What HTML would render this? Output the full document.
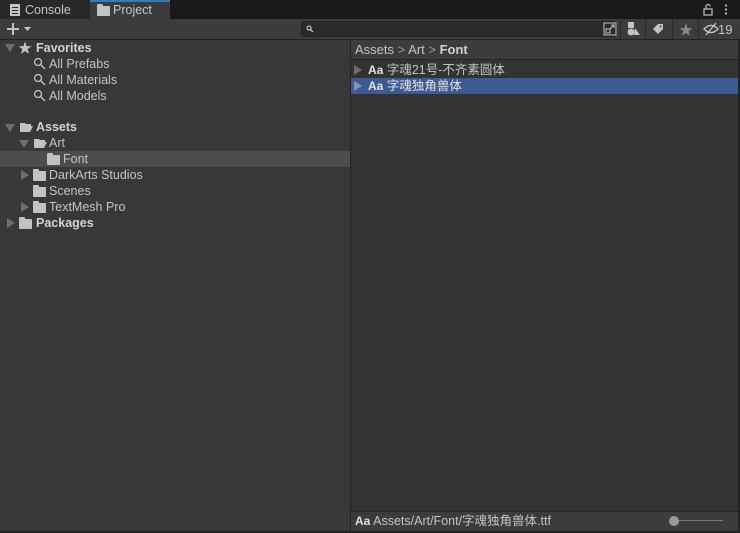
<!DOCTYPE html>
<html><head><meta charset="utf-8"><style>
*{margin:0;padding:0;box-sizing:border-box}
body{width:740px;height:533px;background:#282828;font-family:"Liberation Sans","Noto Sans CJK SC",sans-serif;font-size:12.5px;color:#c4c4c4;position:relative;overflow:hidden}
.abs{position:absolute}
.tabbar{left:0;top:0;width:740px;height:19px;background:#191919}
.tab{top:0;height:19px;line-height:21px;font-size:12.5px;color:#c4c4c4}
.toolbar{left:0;top:19px;width:740px;height:21px;background:#3c3c3c;border-bottom:1px solid #232323}
.left{left:0;top:40px;width:350px;height:493px;background:#383838}
.right{left:351px;top:40px;width:389px;height:471px;background:#333}
.div{left:350px;top:40px;width:1px;height:493px;background:#232323}
.row{position:absolute;height:16px;line-height:16px;white-space:nowrap;font-size:12.5px}
.b{font-weight:bold;color:#d2d2d2}
.tri{position:absolute;width:0;height:0}
.td{border-left:5px solid transparent;border-right:5px solid transparent;border-top:8px solid #6e6e6e}
.tr{border-top:5px solid transparent;border-bottom:5px solid transparent;border-left:8px solid #6e6e6e}
.fold{position:absolute;width:13px;height:10px;background:#c2c2c2;border-radius:1px}
.fold:before{content:"";position:absolute;left:0;top:-2px;width:6px;height:3px;background:#c2c2c2;border-radius:1px 1px 0 0}
.sel{background:#3d5a91}
</style></head><body>
<div class="abs tabbar"></div>
<div class="abs tab" style="left:0;width:90px;background:#282828"></div>
<svg class="abs" style="left:9px;top:4px" width="12" height="12"><rect x="1" y="0" width="10" height="12" fill="#c4c4c4"/><g stroke="#282828" stroke-width="1"><line x1="3" y1="3.5" x2="9" y2="3.5"/><line x1="3" y1="6.5" x2="9" y2="6.5"/><line x1="3" y1="9.5" x2="9" y2="9.5"/></g></svg>
<div class="abs tab" style="left:25px">Console</div>
<div class="abs tab" style="left:90px;width:80px;background:#3c3c3c;border-top:2px solid #3a79bb"></div>
<div class="fold" style="left:97px;top:6px"></div>
<div class="abs tab" style="left:113px">Project</div>
<svg class="abs" style="left:702px;top:3px" width="30" height="13"><rect x="2" y="6" width="8" height="6" fill="none" stroke="#c4c4c4" stroke-width="1.2"/><path d="M4 6V3.5a2 2 0 0 1 4 0" fill="none" stroke="#c4c4c4" stroke-width="1.2"/><circle cx="24" cy="2.5" r="1.1" fill="#c4c4c4"/><circle cx="24" cy="6.5" r="1.1" fill="#c4c4c4"/><circle cx="24" cy="10.5" r="1.1" fill="#c4c4c4"/></svg>

<div class="abs toolbar"></div>
<svg class="abs" style="left:7px;top:23px" width="28" height="12"><path d="M6 0v12M0 6h12" stroke="#c4c4c4" stroke-width="2"/><path d="M17 4h7l-3.5 4z" fill="#c4c4c4"/></svg>
<div class="abs" style="left:301px;top:21px;width:316px;height:16px;background:#2a2a2a;border:1px solid #212121;border-radius:4px"></div>
<svg class="abs" style="left:306px;top:25px" width="8" height="8"><circle cx="3" cy="3" r="2" fill="none" stroke="#c4c4c4" stroke-width="1.2"/><path d="M4.5 4.5L7 7" stroke="#c4c4c4" stroke-width="1.3"/></svg>
<svg class="abs" style="left:603px;top:22px" width="14" height="14"><rect x="1" y="1" width="12" height="12" fill="none" stroke="#c4c4c4"/><rect x="3" y="7" width="4" height="4" fill="none" stroke="#c4c4c4"/><path d="M7 7l4-4M8 3h3v3" fill="none" stroke="#c4c4c4"/></svg>
<div class="abs" style="left:620px;top:19px;width:1px;height:21px;background:#2a2a2a"></div>
<svg class="abs" style="left:626px;top:21px" width="16" height="16"><rect x="2" y="1" width="6" height="6" fill="#c4c4c4"/><circle cx="5" cy="11" r="3.5" fill="#c4c4c4"/><path d="M9 7l5 7H8z" fill="#c4c4c4"/></svg>
<div class="abs" style="left:645px;top:19px;width:1px;height:21px;background:#2a2a2a"></div>
<svg class="abs" style="left:652px;top:23px" width="14" height="12"><path d="M1 6l5-5h5v5l-5 5z" fill="#c4c4c4"/><circle cx="8.5" cy="3.5" r="1" fill="#3c3c3c"/></svg>
<div class="abs" style="left:672px;top:19px;width:1px;height:21px;background:#2a2a2a"></div>
<div class="abs" style="left:679px;top:20px;font-size:14px;color:#8a8a8a">★</div>
<div class="abs" style="left:698px;top:19px;width:1px;height:21px;background:#2a2a2a"></div>
<svg class="abs" style="left:703px;top:22px" width="16" height="14"><path d="M1 7q7-7 14 0q-7 7-14 0z" fill="none" stroke="#c4c4c4" stroke-width="1.3"/><path d="M3 13L13 1" stroke="#c4c4c4" stroke-width="1.3"/></svg>
<div class="abs" style="left:718px;top:22px;font-size:13px">19</div>

<div class="abs left"></div>
<div class="abs div"></div>
<div class="abs right"></div>
<div class="abs" style="left:351px;top:40px;width:389px;height:20px;background:#3c3c3c;border-bottom:1px solid #262626"></div>
<div class="abs" style="left:355px;top:42px;line-height:16px;font-size:13px;color:#c4c4c4">Assets <span style="color:#999">&gt;</span> Art <span style="color:#999">&gt;</span> <b style="color:#d2d2d2">Font</b></div>

<div class="tri td" style="left:5px;top:44px"></div>
<div class="abs" style="left:18px;top:38px;font-size:14px;color:#c4c4c4">★</div>
<div class="row b" style="left:36px;top:40px">Favorites</div>
<svg class="abs" style="left:33px;top:57px" width="13" height="45"><g fill="none" stroke="#c4c4c4" stroke-width="1.3"><circle cx="5" cy="5" r="3.5"/><path d="M7.5 7.5L12 12"/><circle cx="5" cy="21" r="3.5"/><path d="M7.5 23.5L12 28"/><circle cx="5" cy="37" r="3.5"/><path d="M7.5 39.5L12 44"/></g></svg>
<div class="row" style="left:49px;top:56px">All Prefabs</div>
<div class="row" style="left:49px;top:72px">All Materials</div>
<div class="row" style="left:49px;top:88px">All Models</div>

<div class="tri td" style="left:5px;top:124px"></div>
<svg class="abs" style="left:19px;top:121px" width="15" height="12"><path d="M1 2h5l1 1h5v2H4L1 11z M4 5h10l-3 6H1z" fill="#c2c2c2"/></svg>
<div class="row b" style="left:36px;top:119px">Assets</div>
<div class="tri td" style="left:19px;top:140px"></div>
<svg class="abs" style="left:33px;top:137px" width="15" height="12"><path d="M1 2h5l1 1h5v2H4L1 11z M4 5h10l-3 6H1z" fill="#c2c2c2"/></svg>
<div class="row" style="left:49px;top:135px">Art</div>
<div class="abs" style="left:0;top:151px;width:350px;height:16px;background:#4d4d4d"></div>
<div class="fold" style="left:47px;top:155px"></div>
<div class="row" style="left:63px;top:151px">Font</div>
<div class="tri tr" style="left:21px;top:170px"></div>
<div class="fold" style="left:33px;top:171px"></div>
<div class="row" style="left:49px;top:167px">DarkArts Studios</div>
<div class="fold" style="left:33px;top:187px"></div>
<div class="row" style="left:49px;top:183px">Scenes</div>
<div class="tri tr" style="left:21px;top:202px"></div>
<div class="fold" style="left:33px;top:203px"></div>
<div class="row" style="left:49px;top:199px">TextMesh Pro</div>
<div class="tri tr" style="left:7px;top:218px"></div>
<div class="fold" style="left:19px;top:219px"></div>
<div class="row b" style="left:36px;top:215px">Packages</div>

<div class="tri tr" style="left:354px;top:65px"></div>
<div class="row" style="left:368px;top:62px"><b style="color:#e0e0e0;font-size:12px">Aa</b> 字魂21号-不齐素圆体</div>
<div class="abs sel" style="left:351px;top:78px;width:389px;height:16px"></div>
<div class="tri tr" style="left:354px;top:81px;border-left-color:#7f93b8"></div>
<div class="row" style="left:368px;top:78px;color:#e4e4e4"><b style="font-size:12px">Aa</b> 字魂独角兽体</div>

<div class="abs" style="left:351px;top:511px;width:389px;height:20px;background:#3c3c3c;border-top:1px solid #262626"></div>
<div class="row" style="left:355px;top:513px"><b style="color:#e0e0e0;font-size:12px">Aa</b> Assets/Art/Font/字魂独角兽体.ttf</div>
<div class="abs" style="left:676px;top:520px;width:47px;height:1px;background:#777"></div>
<div class="abs" style="left:669px;top:516px;width:10px;height:10px;border-radius:50%;background:#999"></div>
<div class="abs" style="left:0;top:531px;width:740px;height:2px;background:#232323"></div>
<div class="abs" style="left:738px;top:40px;width:2px;height:493px;background:#232323"></div>
</body></html>
